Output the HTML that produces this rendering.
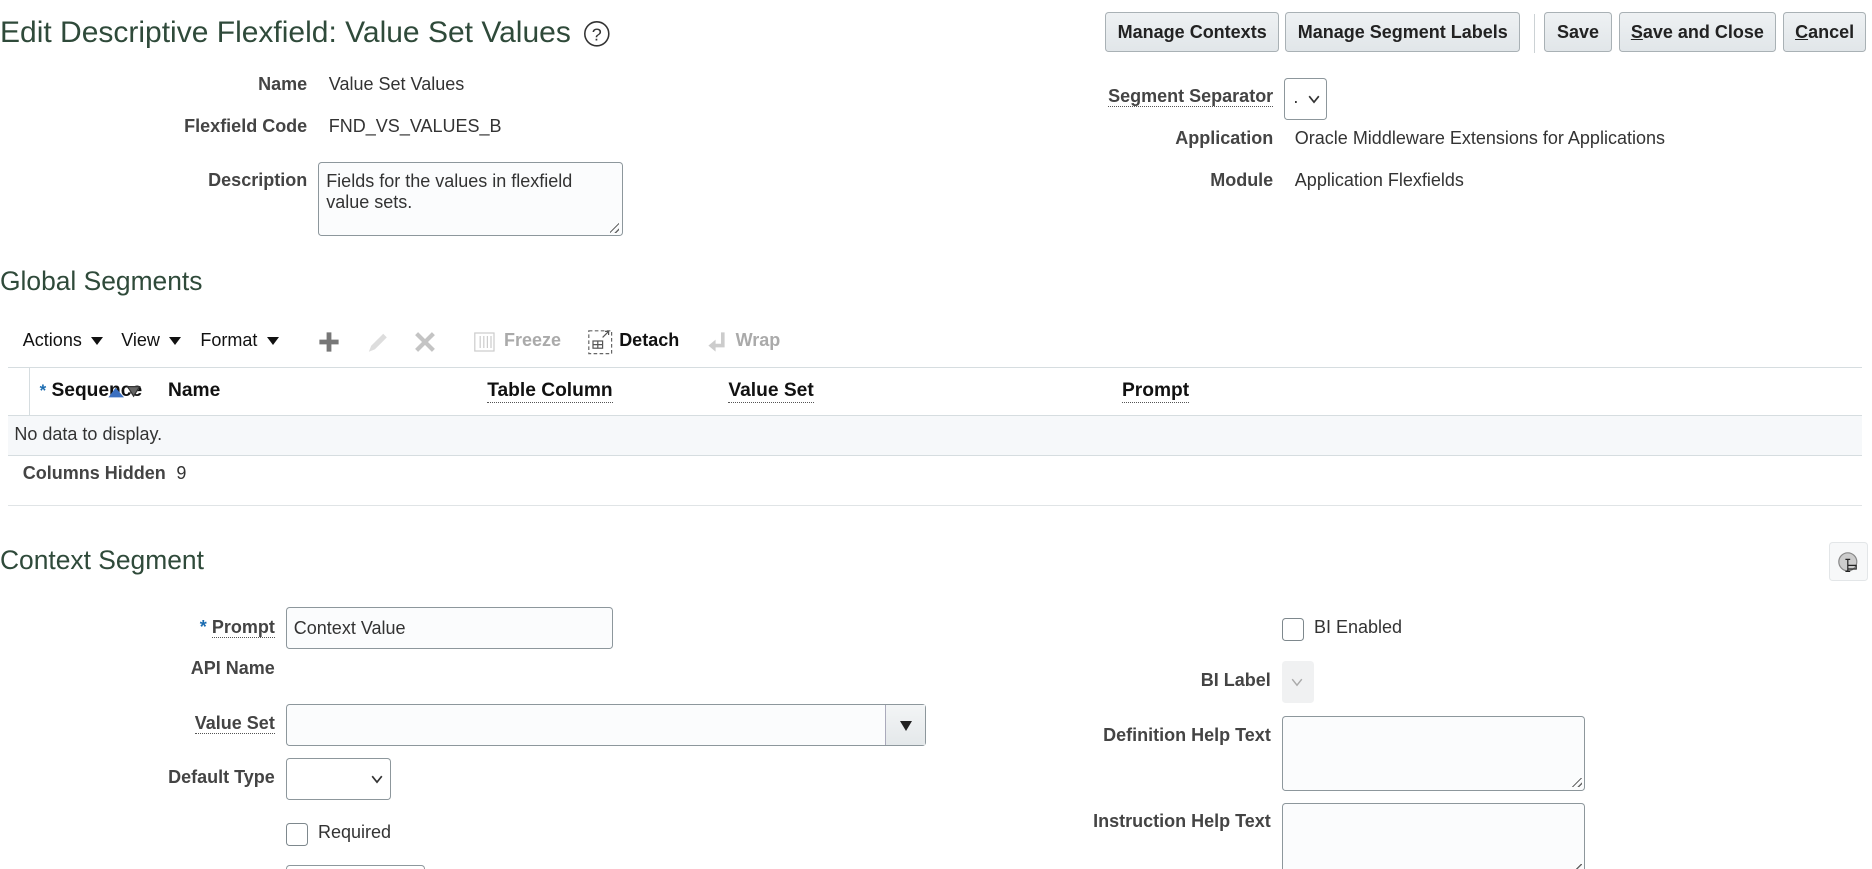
<!DOCTYPE html>
<html><head><meta charset="utf-8"><style>
html,body{margin:0;padding:0;background:#fff;overflow:hidden}
#w{zoom:1.2;position:relative;width:1560px;height:724px;font-family:"Liberation Sans",Arial,sans-serif;color:#333;font-size:15px}
.a{position:absolute;white-space:nowrap;line-height:18px}
.h{color:#2f4a3a;font-size:22px;line-height:26px}
.l{font-weight:bold;color:#444;text-align:right}
.u{border-bottom:1px dotted #555}
.btn{position:absolute;top:10px;height:33px;border:1px solid #a9b1b5;border-radius:3px;background:linear-gradient(#eef1f3,#e1e6e9);font-weight:bold;font-size:15px;color:#222;text-align:center;line-height:33px;box-sizing:border-box}
.box{position:absolute;border:1px solid #8d979c;border-radius:3px;background:#fbfcfd;box-sizing:border-box}
.th{position:absolute;top:317px;font-weight:bold;font-size:16px;color:#111;line-height:18px}
.cb{position:absolute;width:19px;height:19px;border:1px solid #7e888d;border-radius:3px;box-sizing:border-box;background:#fff}
.tri{display:inline-block;width:0;height:0;border-left:5px solid transparent;border-right:5px solid transparent;border-top:7px solid #111;vertical-align:middle;margin-left:8px}
.grip{position:absolute;right:2px;bottom:2px;width:8px;height:8px;background:linear-gradient(135deg,transparent 45%,#666 45%,#666 55%,transparent 55%,transparent 75%,#666 75%,#666 85%,transparent 85%)}
</style></head><body><div id="w">

<div class="a h" style="left:0;top:13px;font-size:25px;line-height:28px">Edit Descriptive Flexfield: Value Set Values</div>
<svg class="a" style="left:486px;top:17px" width="23" height="23" viewBox="0 0 23 23"><circle cx="11.5" cy="11.5" r="10" fill="none" stroke="#333" stroke-width="1.3"/><text x="11.5" y="17" text-anchor="middle" font-family="Liberation Sans" font-size="15" fill="#333">?</text></svg>

<div class="btn" style="left:921px;width:145px">Manage Contexts</div>
<div class="btn" style="left:1071px;width:196px">Manage Segment Labels</div>
<div class="a" style="left:1278px;top:12px;width:1px;height:32px;background:#ccd2d5"></div>
<div class="btn" style="left:1287px;width:56px">Save</div>
<div class="btn" style="left:1349px;width:131px"><u>S</u>ave and Close</div>
<div class="btn" style="left:1486px;width:69px"><u>C</u>ancel</div>

<div class="a l" style="right:1304px;top:62px">Name</div>
<div class="a" style="left:274px;top:62px">Value Set Values</div>
<div class="a l" style="right:1304px;top:97px">Flexfield Code</div>
<div class="a" style="left:274px;top:97px">FND_VS_VALUES_B</div>
<div class="a l" style="right:1304px;top:142px">Description</div>
<div class="box" style="left:265px;top:135px;width:254px;height:62px"><div style="padding:7px 6px;line-height:17px;white-space:normal">Fields for the values in flexfield value sets.</div><div class="grip"></div></div>

<div class="a l" style="right:499px;top:72px"><span class="u">Segment Separator</span></div>
<div class="box" style="left:1070px;top:65px;width:36px;height:35px;background:#fff"><span class="a" style="left:7px;top:7px">.</span><svg class="a" style="left:19px;top:13px" width="10" height="8"><path d="M1 1l4 5 4-5" fill="none" stroke="#333" stroke-width="1.4"/></svg></div>
<div class="a l" style="right:499px;top:107px">Application</div>
<div class="a" style="left:1079px;top:107px">Oracle Middleware Extensions for Applications</div>
<div class="a l" style="right:499px;top:142px">Module</div>
<div class="a" style="left:1079px;top:142px">Application Flexfields</div>

<div class="a h" style="left:0;top:222px">Global Segments</div>

<div class="a" style="left:19px;top:275px;font-size:15px;color:#111">Actions<span class="tri"></span></div>
<div class="a" style="left:101px;top:275px;font-size:15px;color:#111">View<span class="tri"></span></div>
<div class="a" style="left:167px;top:275px;font-size:15px;color:#111">Format<span class="tri"></span></div>
<svg class="a" style="left:264px;top:275px" width="20" height="20"><path d="M10 2v16M2 10h16" stroke="#777" stroke-width="4"/></svg>
<svg class="a" style="left:303px;top:274px" width="22" height="22"><path d="M4 19l2-5 10-10 3 3-10 10z" fill="#ddd"/></svg>
<svg class="a" style="left:344px;top:275px" width="20" height="20"><path d="M3 3l14 14M17 3L3 17" stroke="#c4c4c4" stroke-width="3.5"/></svg>
<svg class="a" style="left:394px;top:275px" width="20" height="20"><rect x="1.5" y="2.5" width="16" height="15" fill="none" stroke="#ccc"/><path d="M6 5v10M9 5v10M12 5v10M15 5v10" stroke="#ccc"/></svg>
<div class="a" style="left:420px;top:275px;font-size:15px;font-weight:bold;color:#aaa">Freeze</div>
<svg class="a" style="left:489px;top:274px" width="22" height="22"><rect x="1.5" y="1.5" width="19" height="19" fill="none" stroke="#666" stroke-dasharray="3 2"/><rect x="5" y="10" width="8" height="6" fill="none" stroke="#555"/><path d="M5 13h8M9 10v6M13 7l5-5M15 2h3v3" stroke="#555" fill="none"/></svg>
<div class="a" style="left:516px;top:275px;font-size:15px;font-weight:bold;color:#111">Detach</div>
<svg class="a" style="left:588px;top:275px" width="20" height="20"><path d="M14 2v11H6" stroke="#ccc" stroke-width="3" fill="none"/><path d="M2 13l6-5v10z" fill="#ccc"/></svg>
<div class="a" style="left:613px;top:275px;font-size:15px;font-weight:bold;color:#aaa">Wrap</div>

<div class="a" style="left:7px;top:306px;width:1545px;height:1px;background:#d6dde0"></div>
<div class="a" style="left:24px;top:307px;width:1px;height:39px;background:#d6dde0"></div>
<div class="th" style="left:33px"><span style="color:#1a6bb0;font-size:14px;vertical-align:top">*</span> Sequence</div>
<svg class="a" style="left:88px;top:319px" width="38" height="14"><path d="M2 12l6-8 7 8z" fill="#3b6fc0"/><path d="M18 3h10l-5 8z" fill="#666" stroke="#333"/></svg>
<div class="th" style="left:140px">Name</div>
<div class="th u" style="left:406px">Table Column</div>
<div class="th u" style="left:607px">Value Set</div>
<div class="th u" style="left:935px">Prompt</div>
<div class="a" style="left:7px;top:346px;width:1545px;height:32px;background:#f6f8fa;border-top:1px solid #d6dde0;border-bottom:1px solid #d6dde0"></div>
<div class="a" style="left:12px;top:353px">No data to display.</div>
<div class="a" style="left:19px;top:386px;font-weight:bold;color:#444">Columns Hidden</div>
<div class="a" style="left:147px;top:386px">9</div>
<div class="a" style="left:7px;top:421px;width:1545px;height:1px;background:#e0e4e6"></div>

<div class="a h" style="left:0;top:454px">Context Segment</div>
<div class="a" style="left:1524px;top:452px;width:33px;height:32px;border:1px solid #e3e6e8;border-radius:3px;background:#f7f8f9;box-sizing:border-box"><svg style="position:absolute;left:6px;top:6px" width="20" height="20"><circle cx="9" cy="9" r="7.5" fill="#ccc" stroke="#888"/><path d="M9 7v10M7 7h4M7 17h4M9 12h7v3H9" stroke="#222" fill="none"/></svg></div>

<div class="a l" style="right:1331px;top:514px"><span style="color:#1a6bb0">*</span> <span class="u">Prompt</span></div>
<div class="box" style="left:238px;top:506px;width:273px;height:35px"><span class="a" style="left:6px;top:8px">Context Value</span></div>
<div class="a l" style="right:1331px;top:548px">API Name</div>
<div class="a l" style="right:1331px;top:594px"><span class="u">Value Set</span></div>
<div class="box" style="left:238px;top:587px;width:534px;height:35px"><div style="position:absolute;right:0;top:0;width:33px;height:33px;border-left:1px solid #aab;background:linear-gradient(#f3f5f6,#e4e8ea)"><div style="position:absolute;left:12px;top:13px;width:0;height:0;border-left:5px solid transparent;border-right:5px solid transparent;border-top:9px solid #222"></div></div></div>
<div class="a l" style="right:1331px;top:639px">Default Type</div>
<div class="box" style="left:238px;top:632px;width:88px;height:35px;background:#fff"><svg class="a" style="left:70px;top:13px" width="10" height="8"><path d="M1 1l4 5 4-5" fill="none" stroke="#333" stroke-width="1.4"/></svg></div>
<div class="cb" style="left:238px;top:686px"></div>
<div class="a" style="left:265px;top:685px">Required</div>
<div class="box" style="left:238px;top:721px;width:116px;height:20px;background:#fff"></div>

<div class="cb" style="left:1068px;top:515px"></div>
<div class="a" style="left:1095px;top:514px">BI Enabled</div>
<div class="a l" style="right:501px;top:558px">BI Label</div>
<div class="a" style="left:1068px;top:551px;width:27px;height:35px;background:#f0f1f2;border-radius:3px"><svg style="position:absolute;left:8px;top:14px" width="10" height="8"><path d="M1 1l4 5 4-5" fill="none" stroke="#aaa" stroke-width="1.2"/></svg></div>
<div class="a l" style="right:501px;top:604px">Definition Help Text</div>
<div class="box" style="left:1068px;top:597px;width:253px;height:62px"><div class="grip"></div></div>
<div class="a l" style="right:501px;top:676px">Instruction Help Text</div>
<div class="box" style="left:1068px;top:669px;width:253px;height:62px"><div class="grip"></div></div>

</div></body></html>
